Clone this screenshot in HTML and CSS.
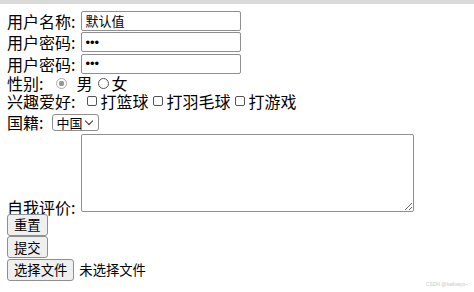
FILE: index.html
```html
<!DOCTYPE html>
<html lang="zh-CN">
<head>
  <meta charset="UTF-8">
  <meta name="viewport" content="width=device-width, initial-scale=1.0">
  <title>表单</title>
  <link rel="stylesheet" href="styles.css">
</head>
<body>
  <div class="topbar"></div>
  <form class="form">
    <div class="row">
      <label class="label">用户名称:</label>
      <input class="text" type="text" value="默认值" />
    </div>
    <div class="row">
      <label class="label">用户密码:</label>
      <input class="text pwd" type="password" value="123" />
    </div>
    <div class="row">
      <label class="label">用户密码:</label>
      <input class="text pwd" type="password" value="123" />
    </div>
    <div class="row row-radio">
      <label class="label">性别:</label>
      <input class="radio first" type="radio" name="sex" checked />
      <span class="opt">男</span>
      <input class="radio" type="radio" name="sex" />
      <span class="opt">女</span>
    </div>
    <div class="row row-check">
      <label class="label">兴趣爱好:</label>
      <input class="check" type="checkbox" />
      <span class="opt">打篮球</span>
      <input class="check" type="checkbox" />
      <span class="opt">打羽毛球</span>
      <input class="check" type="checkbox" />
      <span class="opt">打游戏</span>
    </div>
    <div class="row row-select">
      <label class="label">国籍:</label>
      <span class="select-wrap">
        <select class="select">
          <option>中国</option>
          <option>美国</option>
        </select>
      </span>
    </div>
    <div class="row row-area">
      <label class="label">自我评价:</label>
      <textarea class="area"></textarea>
    </div>
    <div class="btn-row"><button type="reset" class="btn">重置</button></div>
    <div class="btn-row"><button type="submit" class="btn">提交</button></div>
    <div class="btn-row">
      <button type="button" class="btn">选择文件</button>
      <span class="file-tip">未选择文件</span>
    </div>
  </form>
  <div class="mark">CSDN @baibaiyo~</div>
</body>
</html>
```

FILE: styles.css
```css
* { box-sizing: border-box; }
body {
  margin: 0;
  font-family: "Noto Sans CJK SC", "Liberation Sans", sans-serif;
  font-size: 16px;
  color: #000;
  background: #fff;
  overflow: hidden;
}
.topbar {
  height: 4px;
  background: #d9d9d9;
}
.form {
  padding: 6px 7px 0;
}
.row {
  display: flex;
  align-items: center;
  height: 21.5px;
  line-height: 1;
  white-space: nowrap;
}
.label {
  margin-right: 6px;
}
.text {
  width: 160px;
  height: 20px;
  margin: 0;
  padding: 1px 3px;
  border: 1px solid #8f8f8f;
  border-radius: 2px;
  font-family: inherit;
  font-size: 13px;
  line-height: 1;
}
.pwd {
  font-family: "Liberation Sans", sans-serif;
  font-size: 13px;
  letter-spacing: 0;
}
.row-radio { height: 17px; }
.row-radio .label { margin-right: 13px; }
.radio {
  appearance: none;
  width: 11px;
  height: 11px;
  margin: 0 2px 0 0;
  border: 1px solid #555;
  border-radius: 50%;
  background: #fff;
}
.radio:checked {
  border-color: #aaa;
  background: radial-gradient(circle, #999 0 2.5px, #fff 3px);
}
.radio.first { margin-right: 9px; }
.row-radio .opt { margin-right: 6px; }
.row-check { height: 19.5px; }
.row-check .label { margin-right: 12px; }
.check {
  appearance: none;
  width: 10px;
  height: 10px;
  margin: 0 3px 0 0;
  border: 1px solid #555;
  border-radius: 2px;
  background: #fff;
}
.row-check .opt { margin-right: 5px; }
.row-select { height: 21.5px; }
.row-select .label { margin-right: 9px; }
.select-wrap {
  position: relative;
  display: inline-block;
  margin-top: 2px;
}
.select-wrap::after {
  content: "";
  position: absolute;
  right: 7px;
  top: 4px;
  width: 5px;
  height: 5px;
  border-right: 1px solid #333;
  border-bottom: 1px solid #333;
  transform: rotate(45deg);
  pointer-events: none;
}
.select {
  appearance: none;
  display: block;
  width: 47px;
  height: 17px;
  padding: 0 0 0 3px;
  border: 1px solid #8f8f8f;
  border-radius: 3px;
  font-family: inherit;
  font-size: 13px;
  line-height: 15px;
  background: #fff;
  color: #000;
}
.row-area {
  align-items: flex-end;
  height: 81px;
  padding-top: 0.5px;
}
.row-area .label { margin-bottom: -1px; margin-right: 6px; }
.area {
  width: 333px;
  height: 78px;
  margin: 0 0 2px;
  border: 1px solid #8f8f8f;
  border-radius: 2px;
  font-family: inherit;
}
.btn-row {
  display: flex;
  align-items: center;
  height: 22.5px;
  white-space: nowrap;
}
.btn {
  height: 22px;
  margin: 0;
  padding: 0 6px;
  border: 1px solid #8f8f8f;
  border-radius: 3px;
  background: #efefef;
  font-family: inherit;
  font-size: 13.33px;
  line-height: 1;
  color: #000;
}
.file-tip {
  margin-left: 5px;
  font-size: 13.33px;
}
.mark {
  position: absolute;
  right: 6px;
  bottom: 5px;
  font-family: "Liberation Sans", sans-serif;
  font-size: 5px;
  color: #c8c8c8;
}
```
